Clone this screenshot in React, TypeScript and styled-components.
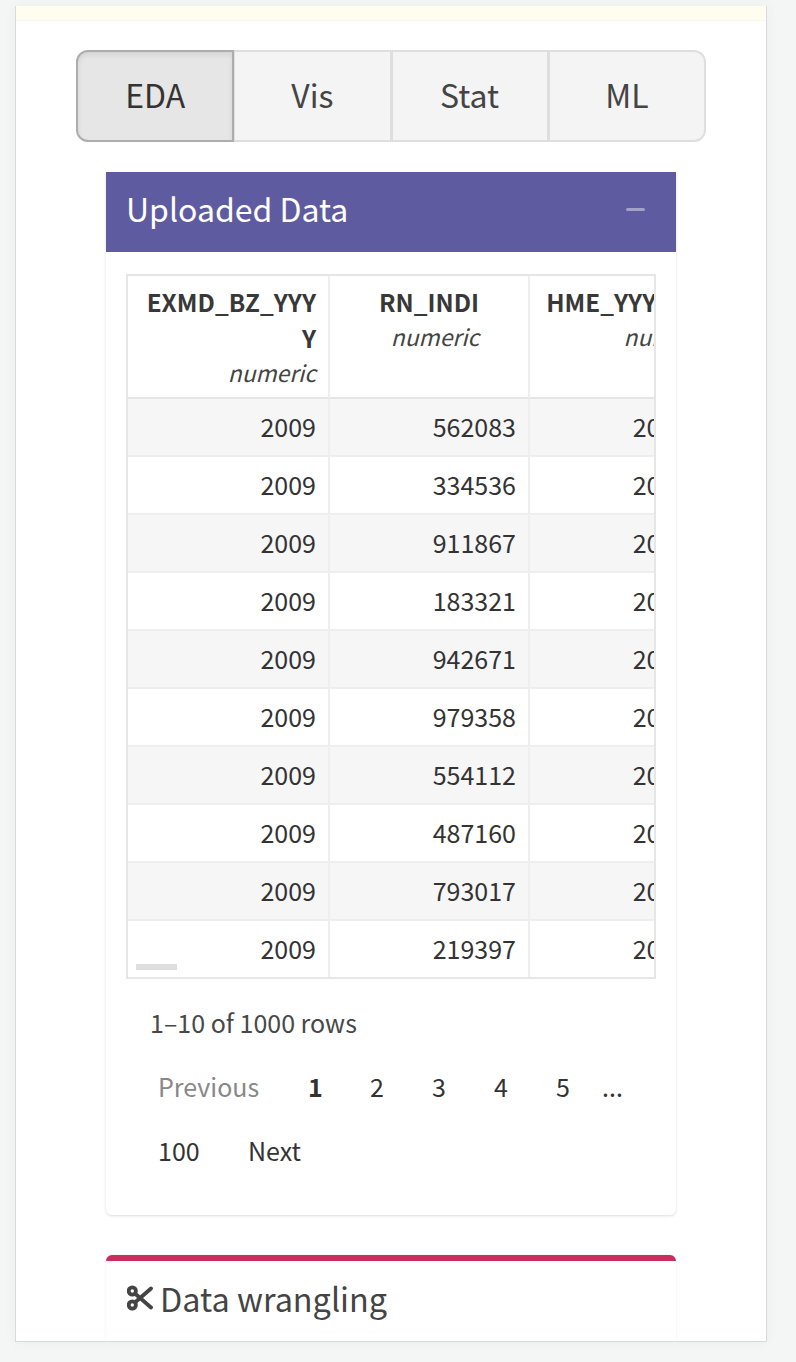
import React from "react";
import styled, { createGlobalStyle } from "styled-components";

const Global = createGlobalStyle`
  html, body { margin: 0; padding: 0; background: #f4f6f6; }
  body { font-family: "Noto Sans CJK KR", "Noto Sans", sans-serif; color: #333; height: 1362px; overflow: hidden; }
`;

const Page = styled.div`
  padding: 6px 29px 0 15px;
  height: 1362px;
  box-sizing: border-box;
`;

const Frame = styled.main`
  width: 752px;
  height: 1336px;
  box-sizing: border-box;
  background: #fff;
  border: 1px solid #d8dbdb;
  border-top: none;
  overflow: hidden;
  box-shadow: 0 0 14px rgba(0, 0, 0, 0.035);
`;

const Notice = styled.div`
  height: 14px;
  background: #fffdf0;
  border-bottom: 1px solid #f7f7f2;
`;

const Content = styled.div`
  padding: 29px 60px 0 60px;
`;

const ButtonGroup = styled.div`
  display: flex;
  width: 630px;
  height: 92px;
`;

const GroupButton = styled.div<{ $active?: boolean; $pos?: "first" | "last" }>`
  flex: 1;
  display: flex;
  align-items: center;
  justify-content: center;
  box-sizing: border-box;
  padding-bottom: 4px;
  font-size: 32px;
  line-height: 40px;
  color: ${p => (p.$active ? "#333" : "#444")};
  background: ${p => (p.$active ? "#e6e6e6" : "#f4f4f4")};
  border: 2px solid ${p => (p.$active ? "#adadad" : "#dedede")};
  margin-left: ${p => (p.$pos === "first" ? "0" : "-1px")};
  position: relative;
  z-index: ${p => (p.$active ? 1 : 0)};
  box-shadow: ${p => (p.$active ? "inset 0 3px 5px rgba(0,0,0,.08)" : "none")};
  border-radius: ${p => (p.$pos === "first" ? "12px 0 0 12px" : p.$pos === "last" ? "0 12px 12px 0" : "0")};
`;

const Card = styled.section`
  width: 570px;
  margin: 30px 0 0 30px;
  background: #fff;
  border-radius: 0 0 6px 6px;
  box-shadow: 0 1px 3px rgba(0, 0, 0, 0.14);
`;

const CardHeader = styled.header`
  height: 80px;
  background: #5f5ba1;
  display: flex;
  align-items: center;
  justify-content: space-between;
  padding: 0 31px 0 20px;
  color: #fff;
  font-size: 32px;
  line-height: 40px;
`;

const HeaderTitle = styled.span`
  margin-top: -8px;
`;

const Collapse = styled.span`
  width: 19px;
  height: 3px;
  margin-top: -6px;
  border-radius: 2px;
  background: #a3a1c6;
`;

const CardBody = styled.div`
  padding: 22px 20px 33px;
`;

const TableWrap = styled.div`
  position: relative;
  width: 530px;
  height: 705px;
  box-sizing: border-box;
  border: 2px solid #e6e6e6;
  overflow: hidden;
`;

const Table = styled.div`
  display: grid;
  grid-template-columns: 202px 200px 200px;
  width: 602px;
`;

const HeadCell = styled.div`
  height: 123px;
  box-sizing: border-box;
  padding: 7.5px 12px 0;
  display: flex;
  justify-content: center;
  align-items: flex-start;
  border-right: 2px solid #eeeeee;
  border-bottom: 2px solid #e6e6e6;
`;

const HeadInner = styled.div`
  text-align: right;
  max-width: 100%;
  word-break: break-all;
`;

const HeadName = styled.div`
  font-size: 24.3px;
  line-height: 36px;
  font-weight: 700;
  color: #383838;
`;

const HeadType = styled.div`
  font-size: 22.8px;
  line-height: 34px;
  font-style: italic;
  color: #444;
`;

const Cell = styled.div<{ $odd: boolean }>`
  height: 58px;
  box-sizing: border-box;
  padding: 0 12px 2px;
  display: flex;
  align-items: center;
  justify-content: flex-end;
  font-size: 25px;
  line-height: 34px;
  color: #333;
  background: ${p => (p.$odd ? "#f6f6f6" : "#fff")};
  border-right: 2px solid #eeeeee;
  border-bottom: 2px solid #eeeeee;
`;

const ScrollThumb = styled.div`
  position: absolute;
  left: 8px;
  bottom: 7px;
  width: 41px;
  height: 6px;
  background: #dfdfdf;
`;

const Info = styled.div`
  margin: 26px 0 0 24px;
  font-size: 25px;
  line-height: 34px;
  color: #484848;
`;

const Pager = styled.nav`
  margin-top: 15px;
  display: flex;
  flex-direction: column;
`;

const PagerRow = styled.div`
  height: 64px;
  display: flex;
  align-items: center;
`;

const PageLink = styled.span<{ $left?: number; $width?: number; $muted?: boolean; $current?: boolean }>`
  display: block;
  margin-left: ${p => p.$left ?? 0}px;
  width: ${p => (p.$width ? `${p.$width}px` : "auto")};
  text-align: left;
  font-size: 25px;
  line-height: 34px;
  color: ${p => (p.$muted ? "#888" : "#333")};
  font-weight: ${p => (p.$current ? 700 : 400)};
`;

const NextCard = styled.section`
  width: 570px;
  margin: 40px 0 0 30px;
  background: #fff;
  border-top: 6px solid #c5305f;
  border-radius: 6px 6px 0 0;
  box-shadow: 0 0 2px rgba(0, 0, 0, 0.1);
  height: 100px;
`;

const NextTitle = styled.h3`
  margin: 0;
  padding: 15px 0 0 21px;
  display: flex;
  align-items: center;
  gap: 7px;
  font-size: 32.4px;
  line-height: 44px;
  font-weight: 400;
  color: #444;
`;

const ScissorsIcon = styled.svg`
  width: 26px;
  height: 26px;
  flex: none;
  fill: none;
  stroke: #444;
  stroke-width: 3.8;
  stroke-linecap: round;
`;

const ids = ["562083", "334536", "911867", "183321", "942671", "979358", "554112", "487160", "793017", "219397"];

export default function App() {
  return (
    <Page>
      <Global />
      <Frame>
        <Notice />
        <Content>
          <ButtonGroup>
            <GroupButton $active $pos="first">EDA</GroupButton>
            <GroupButton>Vis</GroupButton>
            <GroupButton>Stat</GroupButton>
            <GroupButton $pos="last">ML</GroupButton>
          </ButtonGroup>
          <Card>
            <CardHeader>
              <HeaderTitle>Uploaded Data</HeaderTitle>
              <Collapse />
            </CardHeader>
            <CardBody>
              <TableWrap>
                <Table>
                  <HeadCell><HeadInner><HeadName>EXMD_BZ_YYYY</HeadName><HeadType>numeric</HeadType></HeadInner></HeadCell>
                  <HeadCell><HeadInner><HeadName>RN_INDI</HeadName><HeadType>numeric</HeadType></HeadInner></HeadCell>
                  <HeadCell><HeadInner><HeadName>HME_YYYYMM</HeadName><HeadType>numeric</HeadType></HeadInner></HeadCell>
                  {ids.map((id, i) => (
                    <React.Fragment key={id}>
                      <Cell $odd={i % 2 === 0}>2009</Cell>
                      <Cell $odd={i % 2 === 0}>{id}</Cell>
                      <Cell $odd={i % 2 === 0}>200901</Cell>
                    </React.Fragment>
                  ))}
                </Table>
                <ScrollThumb />
              </TableWrap>
              <Info>1–10 of 1000 rows</Info>
              <Pager>
                <PagerRow>
                  <PageLink $left={32} $width={150} $muted>Previous</PageLink>
                  <PageLink $width={62} $current>1</PageLink>
                  <PageLink $width={62}>2</PageLink>
                  <PageLink $width={62}>3</PageLink>
                  <PageLink $width={62}>4</PageLink>
                  <PageLink $width={46}>5</PageLink>
                  <PageLink>...</PageLink>
                </PagerRow>
                <PagerRow>
                  <PageLink $left={32} $width={90}>100</PageLink>
                  <PageLink>Next</PageLink>
                </PagerRow>
              </Pager>
            </CardBody>
          </Card>
          <NextCard>
            <NextTitle>
              <ScissorsIcon viewBox="0 0 26 26" aria-hidden="true">
                <circle cx="5.3" cy="6" r="3.6" />
                <circle cx="5.3" cy="20" r="3.6" />
                <path d="M8.8 9.2L24 22.5M8.8 16.8L24 3.5" />
              </ScissorsIcon>
              Data wrangling
            </NextTitle>
          </NextCard>
        </Content>
      </Frame>
    </Page>
  );
}
